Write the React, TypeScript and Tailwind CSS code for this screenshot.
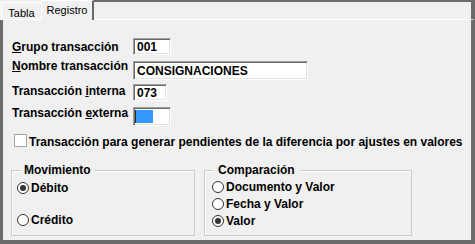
import React from "react";

const font = { fontFamily: '"Liberation Sans", Arial, sans-serif' };

function Sunken({ w, h, children }: { w: string; h: string; children?: React.ReactNode }) {
  return (
    <div
      className={`${w} ${h} flex items-center bg-white border border-t-[#a0a0a0] border-l-[#a0a0a0] border-r-white border-b-white shadow-[inset_1px_1px_0_#696969,inset_-1px_-1px_0_#e3e3e3] pl-[3px] text-[12px] font-bold leading-[14px] text-black`}
    >
      {children}
    </div>
  );
}

function Radio({ checked, label }: { checked?: boolean; label: string }) {
  return (
    <div className="flex items-center h-[14px]">
      <div className="w-[12px] h-[12px] rounded-full border border-[#333333] bg-white flex items-center justify-center">
        {checked && <div className="w-[6px] h-[6px] rounded-full bg-[#333333]" />}
      </div>
      <span className="ml-[2px] text-[12px] font-bold leading-[14px] text-black">{label}</span>
    </div>
  );
}

export default function App() {
  return (
    <div className="w-[475px] h-[244px] flex flex-col bg-[#f0f0f0] overflow-hidden" style={font}>
      {/* tab strip */}
      <div className="h-[20px] flex items-end">
        <div className="h-[18px] w-[40px] ml-[1px] border-l border-t border-white border-b border-b-white flex justify-center pt-[4px] text-[11px] leading-[12px] text-black">
          Tabla
        </div>
        <div className="h-[20px] w-[53px] border-l border-t border-white border-r-2 border-r-[#696969] flex justify-center pt-[3px] text-[11px] leading-[12px] text-black">
          Registro
        </div>
        <div className="flex-1 h-[20px] border-t-2 border-t-[#6b6b6b] border-b border-b-white border-r-4 border-r-[#6b6b6b]" />
      </div>
      {/* page body */}
      <div className="flex-1 flex flex-col border-l-[3px] border-r-4 border-b-4 border-[#6b6b6b] pl-[8px] text-black">
        <div className="mt-[18px] flex items-start h-[17px]">
          <div className="w-[121px] ml-[1px] mt-[2px] text-[12px] font-bold leading-[14px]">
            <span className="underline">G</span>rupo transacción
          </div>
          <Sunken w="w-[38px]" h="h-[17px]">001</Sunken>
        </div>
        <div className="mt-[6px] flex items-start h-[19px]">
          <div className="w-[121px] ml-[1px] -mt-[2px] text-[12px] font-bold leading-[14px]">
            <span className="underline">N</span>ombre transacción
          </div>
          <Sunken w="w-[175px]" h="h-[19px]">CONSIGNACIONES</Sunken>
        </div>
        <div className="mt-[4px] flex items-start h-[17px]">
          <div className="w-[121px] ml-[1px] mt-[0px] text-[12px] font-bold leading-[14px]">
            Transacción <span className="underline">i</span>nterna
          </div>
          <Sunken w="w-[34px]" h="h-[17px]">073</Sunken>
        </div>
        <div className="mt-[6px] flex items-start h-[19px]">
          <div className="w-[121px] ml-[1px] -mt-[1px] text-[12px] font-bold leading-[14px]">
            Transacción <span className="underline">e</span>xterna
          </div>
          <div className="w-[38px] h-[19px] flex items-center bg-white border border-t-[#a0a0a0] border-l-[#a0a0a0] border-r-white border-b-white shadow-[inset_1px_1px_0_#696969,inset_-1px_-1px_0_#e3e3e3] pl-[1px]">
            <div className="w-[1px] h-[13px] bg-[#3a2a10]" />
            <div className="w-[17px] h-[13px] bg-[#3399ff]" />
          </div>
        </div>
        <div className="mt-[8px] flex items-start h-[13px] ml-[3px]">
          <div className="w-[13px] h-[13px] bg-white border border-[#a6a6a6]" />
          <div className="ml-[2px] mt-[1px] text-[12px] font-bold leading-[14px] whitespace-nowrap">
            Transacción para generar pendientes de la diferencia por ajustes en valores
          </div>
        </div>
        <div className="mt-[23px] flex gap-[9px]">
          <div className="relative w-[184px] h-[66px] border border-[#cccccc] shadow-[inset_1px_1px_0_#ffffff]">
            <div className="absolute left-[9px] -top-[8px] px-[3px] bg-[#f0f0f0] text-[12px] font-bold leading-[14px]">
              Movimiento
            </div>
            <div className="pt-[10px] pl-[5px] flex flex-col gap-[18px]">
              <Radio checked label="Débito" />
              <Radio label="Crédito" />
            </div>
          </div>
          <div className="relative w-[208px] h-[66px] border border-[#cccccc] shadow-[inset_1px_1px_0_#ffffff]">
            <div className="absolute left-[8px] -top-[8px] px-[5px] bg-[#f0f0f0] text-[12px] font-bold leading-[14px]">
              Comparación
            </div>
            <div className="pt-[9px] pl-[7px] flex flex-col gap-[3px]">
              <Radio label="Documento y Valor" />
              <Radio label="Fecha y Valor" />
              <Radio checked label="Valor" />
            </div>
          </div>
        </div>
      </div>
    </div>
  );
}
